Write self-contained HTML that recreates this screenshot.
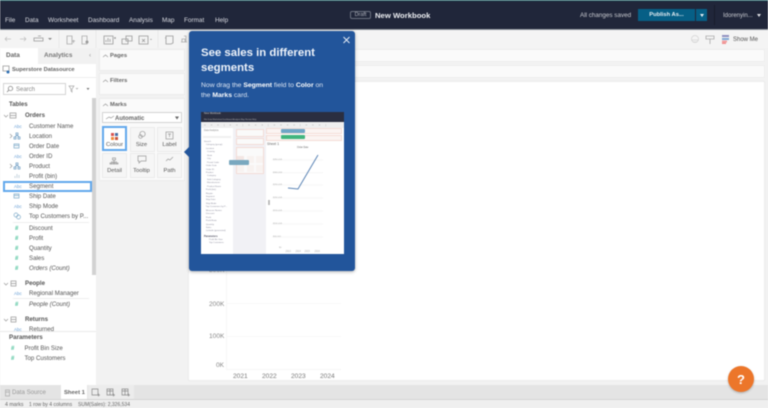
<!DOCTYPE html>
<html><head><meta charset="utf-8"><style>
*{box-sizing:border-box}
html,body{margin:0;padding:0;width:768px;height:408px;overflow:hidden;background:#f2f2f2}
body{font-family:"Liberation Sans",sans-serif;color:#333}
#w{position:absolute;left:0;top:0;width:768px;height:408px;overflow:hidden;filter:blur(.5px)}
.a,.t{position:absolute}
.t{white-space:nowrap;line-height:10px;font-size:6.1px;color:#444}
.m{color:#d8dae0;font-size:6.4px;top:16px}
.f{left:29px;color:#555}
.c{width:25px;border:1px solid #ebebeb;background:#f6f6f6;height:25px}
.l{color:#555;font-size:5.8px;text-align:center;width:27px}
.h{left:15px;font-size:6px;color:#4cc29b;font-weight:bold}
.b{left:14px;font-size:4.5px;color:#6ea3d6}
.y{left:72px;font-size:2.2px;color:#aaa}
.x{top:135px;font-size:2.4px;color:#aaa}
svg{position:absolute;overflow:visible}
</style></head><body><div id="w">
<!-- top bar -->
<div class="a" style="left:0;top:0;width:768px;height:29px;background:#20263a"></div>
<div class="a" style="left:0;top:0;width:768px;height:1px;background:#2f6f72"></div>
<div class="a" style="left:0;top:29px;width:768px;height:1px;background:#8f949c"></div>
<span class="t m" style="left:5px">File</span><span class="t m" style="left:25px">Data</span><span class="t m" style="left:48px">Worksheet</span><span class="t m" style="left:88px">Dashboard</span><span class="t m" style="left:129px">Analysis</span><span class="t m" style="left:162px">Map</span><span class="t m" style="left:184px">Format</span><span class="t m" style="left:215px">Help</span>
<div class="a t" style="left:350px;top:11px;width:21px;height:8px;border:1px solid #6c7280;border-radius:2px;color:#b0b3bc;font-size:5.4px;line-height:6px;text-align:center">Draft</div>
<span class="t" style="left:375px;top:10.500px;color:#eceef2;font-size:7.700px;font-weight:bold">New Workbook</span>
<span class="t" style="left:580px;top:10.500px;color:#c8cad0;font-size:6.300px">All changes saved</span>
<div class="a t" style="left:638px;top:9px;width:57px;height:12px;background:#065f86;color:#e8f0f4;font-size:5.800px;font-weight:bold;line-height:12px;text-align:center">Publish As...</div>
<div class="a" style="left:696px;top:9px;width:11px;height:12px;background:#065f86"></div>
<div class="a" style="left:699.5px;top:14px;border:2px solid transparent;border-top:3px solid #e8f0f4"></div>
<div class="a" style="left:714px;top:5px;width:1px;height:20px;background:#171b2a"></div>
<span class="t" style="left:723px;top:10.500px;color:#c8cad0;font-size:6px">Idorenyin...</span>
<div class="a" style="left:757px;top:14px;border:2px solid transparent;border-top:3px solid #e0e2e6"></div>
<!-- toolbar -->
<div class="a" style="left:0;top:30px;width:768px;height:18px;background:#f4f4f4"></div>
<svg style="left:0;top:30px" width="190" height="18" fill="none" stroke="#aaa" stroke-width=".8">
<path d="M5 9h6M5 9l2-2M5 9l2 2M20 9h6M26 9l-2-2M26 9l-2 2" stroke="#c0c0c0"/>
<path d="M34 8h9v3h-9zM38 6h3" stroke="#999"/><path d="M48 8l2 2 2-2z" fill="#888" stroke="none"/>
<path d="M59 0v18M96 0v18M158 0v18" stroke="#e6e6e6"/>
<path d="M67 6h5v8h-5zM72 11h3M73.500 10v3M82 6h5v8h-5z" stroke="#aaa"/><circle cx="87" cy="12" r="1.500" fill="#999" stroke="none"/>
<path d="M104 6h9v8h-9zM106 12v-2M108 12V8M110 12v-3M114 8h2M115 7v2" stroke="#999"/>
<path d="M122 9h6v5h-6zM126 6h6v5h-6z" stroke="#999"/>
<path d="M139 6h9v8h-9zM142 9l3 3M145 9l-3 3" stroke="#999"/><path d="M150 9l1 1 1-1z" fill="#888" stroke="none"/>
<path d="M166 6h7v7l-2 1h-5zM166 8l-1 0" stroke="#999"/><path d="M181 12h6M182 9h3v3h-3zM184 6h2v6" stroke="#aaa"/>
</svg>
<svg style="left:690px;top:30px" width="78" height="18" fill="none" stroke="#d4d4d4" stroke-width=".8">
<circle cx="5" cy="9" r="3.500"/><path d="M2 10h6M3 12h4"/><path d="M16 6h8v3h-8zM20 9v5" stroke="#aaa"/>
<rect x="32" y="5" width="7" height="2" fill="#8f8fc0" stroke="none"/><rect x="32" y="8" width="7" height="2" fill="#7fa8d5" stroke="none"/><rect x="32" y="10.500" width="5" height="2" fill="#f2a0a0" stroke="none"/><rect x="32" y="12.500" width="4" height="1.500" fill="#f09090" stroke="none"/>
</svg>
<span class="t" style="left:733px;top:34.500px;font-size:6px;color:#555">Show Me</span>
<!-- left data pane -->
<div class="a" style="left:0;top:48px;width:96px;height:337px;background:#fff"></div>
<div class="a" style="left:38px;top:48px;width:58px;height:16px;background:#f1f1f1"></div>
<span class="t" style="left:6px;top:51px;font-size:6.400px;font-weight:bold;color:#666">Data</span>
<span class="t" style="left:44px;top:51px;font-size:6.400px;font-weight:bold;color:#777">Analytics</span>
<span class="t" style="left:89px;top:51px;font-size:6.4px;color:#999">‹</span>
<svg style="left:2px;top:65px" width="10" height="10" fill="none" stroke="#999" stroke-width=".8"><path d="M1 1h6v5h-6z"/><circle cx="6" cy="7" r="1.500" fill="#2f6fb3" stroke="none"/></svg>
<span class="t" style="left:12px;top:64.500px;font-size:5.700px;font-weight:bold;color:#666">Superstore Datasource</span>
<div class="a" style="left:0;top:77px;width:96px;height:1px;background:#eee"></div>
<div class="a" style="left:3px;top:83px;width:63px;height:12px;border:1px solid #d4d4d4;background:#fff"></div>
<svg style="left:6px;top:85px" width="8" height="8" fill="none" stroke="#777" stroke-width=".7"><circle cx="4.500" cy="3.500" r="2.200"/><path d="M3 5L1 7"/></svg>
<span class="t" style="left:16px;top:84.500px;font-size:6px;color:#888">Search</span>
<svg style="left:68px;top:85px" width="26" height="8" fill="none" stroke="#aaa" stroke-width=".7"><path d="M1 1h5L4 4v3L3 6V4zM8 3l1 1 1-1" /><path d="M18.500 3h3l-1.500 2z" fill="#777" stroke="none"/></svg>
<div class="a" style="left:92px;top:98px;width:4px;height:177px;background:#d2d2d2"></div>
<span class="t" style="left:9px;top:100px;font-size:6px;font-weight:bold;color:#555">Tables</span>
<svg style="left:0;top:108px" width="30" height="230" fill="none" stroke="#999" stroke-width=".7">
<path d="M4 7l2 2 2-2M10 5h6v5h-6zM10 7.500h6"/>
<path d="M4 175l2 2 2-2M11 173h5v5h-5zM11 175.500h5"/><path d="M4 211l2 2 2-2M11 209h5v5h-5zM11 211.500h5"/>
<path d="M10 26l2 2-2 2M10 56l2 2-2 2" />
<path d="M16 25h2v2h-2zM14 29h2v2h-2zM18 29h2v2h-2zM17 27l-2 2M17 27l2 2M16 55h2v2h-2zM14 59h2v2h-2zM18 59h2v2h-2zM17 57l-2 2M17 57l2 2" stroke="#6d9cc2"/>
<path d="M14 36h5v4h-5zM14 37.500h5M14 86h5v4h-5zM14 87.500h5" stroke="#7fabc9"/>
<path d="M15 70v-2M17 70v-4M19 70v-3" stroke="#b0c2d2"/><circle cx="16" cy="107" r="2" stroke="#7fabc9"/><circle cx="18.500" cy="109" r="2" stroke="#7fabc9"/>
</svg>
<div class="a" style="left:3px;top:181px;width:89px;height:11px;border:2px solid #62a8ec;background:#fff"></div>
<span class="t" style="left:25px;top:110.500px;font-size:6.100px;font-weight:bold;color:#555">Orders</span>
<span class="t f" style="top:121.500px">Customer Name</span><span class="t f" style="top:131.500px">Location</span><span class="t f" style="top:141.500px">Order Date</span><span class="t f" style="top:151.500px">Order ID</span><span class="t f" style="top:161.500px">Product</span><span class="t f" style="top:171.500px">Profit (bin)</span><span class="t f" style="top:181.500px">Segment</span><span class="t f" style="top:191.500px">Ship Date</span><span class="t f" style="top:201.500px">Ship Mode</span><span class="t f" style="top:211.500px">Top Customers by P...</span>
<div class="a" style="left:13px;top:222px;width:76px;height:1px;background:#eee"></div>
<span class="t f" style="top:223.500px">Discount</span><span class="t f" style="top:233.500px">Profit</span><span class="t f" style="top:243.500px">Quantity</span><span class="t f" style="top:253.500px">Sales</span><span class="t f" style="top:263.500px;font-style:italic">Orders (Count)</span>
<span class="t" style="left:25px;top:278.500px;font-size:6.100px;font-weight:bold;color:#555">People</span>
<span class="t f" style="top:288.500px">Regional Manager</span>
<div class="a" style="left:13px;top:298px;width:76px;height:1px;background:#eee"></div>
<span class="t f" style="top:299.500px;font-style:italic">People (Count)</span>
<span class="t" style="left:25px;top:314.500px;font-size:6.100px;font-weight:bold;color:#555">Returns</span>
<span class="t f" style="top:324.500px">Returned</span>
<span class="t b" style="top:121.500px">Abc</span><span class="t b" style="top:151.500px">Abc</span><span class="t b" style="top:181.500px">Abc</span><span class="t b" style="top:201.500px">Abc</span><span class="t b" style="top:288.500px">Abc</span><span class="t b" style="top:324.500px">Abc</span>
<span class="t h" style="top:223.500px">#</span><span class="t h" style="top:233.500px">#</span><span class="t h" style="top:243.500px">#</span><span class="t h" style="top:253.500px">#</span><span class="t h" style="top:263.500px">#</span><span class="t h" style="top:299.500px">#</span>
<!-- parameters -->
<div class="a" style="left:0;top:331px;width:96px;height:54px;background:#fff;border-top:1px solid #eaeaea"></div>
<span class="t" style="left:9px;top:333px;font-size:6.200px;font-weight:bold;color:#555">Parameters</span>
<span class="t h" style="left:11px;top:343.500px">#</span><span class="t h" style="left:11px;top:353.500px">#</span>
<span class="t" style="left:24.500px;top:343.500px;color:#555">Profit Bin Size</span><span class="t" style="left:24.500px;top:353.500px;color:#555">Top Customers</span>
<!-- shelves column -->
<div class="a" style="left:96px;top:48px;width:92px;height:337px;background:#f2f2f2"></div>
<div class="a" style="left:99px;top:49px;width:86px;height:22px;background:#fafafa;border:1px solid #ececec"></div>
<div class="a" style="left:99px;top:73px;width:86px;height:22px;background:#fafafa;border:1px solid #ececec"></div>
<div class="a" style="left:99px;top:98px;width:86px;height:83px;background:#fafafa;border:1px solid #ececec"></div>
<svg style="left:103px;top:53px" width="6" height="60" fill="none" stroke="#999" stroke-width=".7"><path d="M0 4l2.500-2 2.500 2M0 29l2.500-2 2.500 2M0 53l2.500-2 2.500 2"/></svg>
<span class="t" style="left:110px;top:50.500px;font-weight:bold;color:#666;font-size:5.800px">Pages</span>
<span class="t" style="left:110px;top:75.500px;font-weight:bold;color:#666;font-size:5.800px">Filters</span>
<span class="t" style="left:110px;top:100px;font-weight:bold;color:#666;font-size:5.800px">Marks</span>
<div class="a" style="left:102px;top:112px;width:80px;height:11px;background:#fff;border:1px solid #d4d4d4"></div>
<svg style="left:105px;top:114px" width="76" height="8" fill="none" stroke="#999" stroke-width=".7"><path d="M1 5l3-2 2 1 3-2"/><path d="M70 2.500h4l-2 3z" fill="#666" stroke="none"/></svg>
<span class="t" style="left:115px;top:113.500px;font-weight:bold;color:#666;font-size:6px">Automatic</span>
<div class="a c" style="left:102px;top:126px;background:#fff;border:2px solid #62a8ec"></div>
<div class="a c" style="left:130px;top:127px"></div><div class="a c" style="left:157px;top:127px"></div>
<div class="a c" style="left:102px;top:153px"></div><div class="a c" style="left:130px;top:153px"></div><div class="a c" style="left:157px;top:153px"></div>
<span class="t l" style="left:101px;top:139.500px">Colour</span><span class="t l" style="left:128px;top:139.500px">Size</span><span class="t l" style="left:156px;top:139.500px">Label</span>
<span class="t l" style="left:101px;top:165.500px">Detail</span><span class="t l" style="left:128px;top:165.500px">Tooltip</span><span class="t l" style="left:156px;top:165.500px">Path</span>
<svg style="left:100px;top:128px" width="85" height="50" fill="none" stroke="#999" stroke-width=".7">
<rect x="11" y="5" width="3" height="3" fill="#d9534f" stroke="none"/><rect x="15" y="5" width="3" height="3" fill="#4a6fa5" stroke="none"/><rect x="11" y="9" width="3" height="3" fill="#f08a3c" stroke="none"/><rect x="15" y="9" width="3" height="3" fill="#c8553d" stroke="none"/>
<circle cx="42.500" cy="6" r="2.700"/><circle cx="40.500" cy="8.500" r="1.800"/><rect x="66" y="4" width="7" height="7"/><path d="M68 6h3M69.500 6v3"/>
<path d="M12.500 30h3v2h-3zM10 35h2v1h-2zM13 35h2v1h-2zM16 35h2v1h-2zM14 32v3M11 34h6"/><path d="M38 28h8v5h-5l-2 2v-2h-1z"/><path d="M66 33l2-2 2 1 3-3"/>
</svg>
<!-- right area -->
<div class="a" style="left:188px;top:48px;width:580px;height:337px;background:#f2f2f2"></div>
<div class="a" style="left:190px;top:49px;width:575px;height:13px;background:#fafafa;border:1px solid #eeeeee"></div>
<div class="a" style="left:190px;top:65px;width:575px;height:13px;background:#fafafa;border:1px solid #eeeeee"></div>
<div class="a" style="left:188px;top:81px;width:577px;height:300px;background:#fff;border:1px solid #ececec"></div>
<!-- chart -->
<div class="a" style="left:226px;top:270px;width:1px;height:100px;background:#f6f6f6"></div>
<div class="a" style="left:226px;top:303px;width:115px;height:1px;background:#f8f8f8"></div>
<div class="a" style="left:226px;top:336px;width:115px;height:1px;background:#f8f8f8"></div>
<div class="a" style="left:226px;top:369px;width:115px;height:1px;background:#f6f6f6"></div>
<span class="t" style="left:209px;top:266px;font-size:6.600px;color:#999">300K</span>
<span class="t" style="left:209px;top:299.500px;font-size:6.600px;color:#888">200K</span>
<span class="t" style="left:209px;top:331.500px;font-size:6.600px;color:#888">100K</span>
<span class="t" style="left:216px;top:360.500px;font-size:6.600px;color:#888">0K</span>
<span class="t" style="left:233px;top:371.500px;font-size:6.600px;color:#777">2021</span>
<span class="t" style="left:262px;top:371.500px;font-size:6.600px;color:#777">2022</span>
<span class="t" style="left:291px;top:371.500px;font-size:6.600px;color:#777">2023</span>
<span class="t" style="left:320px;top:371.500px;font-size:6.600px;color:#777">2024</span>
<!-- popup -->
<div class="a" style="left:189px;top:31px;width:166px;height:240px;background:#22559b;border-radius:3px;box-shadow:0 1px 3px rgba(0,0,0,.3)"></div>
<div class="a" style="left:184px;top:146px;border:6px solid transparent;border-right:6px solid #22559b;border-left:0;height:12px"></div>
<svg style="left:343px;top:36px" width="7" height="8" stroke="#e4ebf5" stroke-width="1"><path d="M.5 1l6 6M6.500 1l-6 6"/></svg>
<div class="t" style="left:201px;top:46px;font-size:11.400px;line-height:14.500px;font-weight:bold;color:#eef3fa">See sales in different<br>segments</div>
<div class="t" style="left:201px;top:80.500px;font-size:6.800px;line-height:10px;color:#dde6f3">Now drag the <b style="color:#fff">Segment</b> field to <b style="color:#fff">Color</b> on<br>the <b style="color:#fff">Marks</b> card.</div>
<!-- thumbnail -->
<div class="a" style="left:201px;top:112px;width:143px;height:142px;background:#fff;overflow:hidden">
<div class="a" style="left:0;top:0;width:143px;height:10px;background:#2a2e40"></div>
<span class="t" style="left:3px;top:-3px;font-size:2.500px;color:#ccc">New Workbook</span>
<span class="t" style="left:3px;top:2.500px;font-size:2px;color:#bbb">File   Data   Worksheet   Dashboard   Analysis   Map   Format   Help</span>
<div class="a" style="left:0;top:10px;width:143px;height:6px;background:#efefef"></div>
<div class="t" style="left:3px;top:11px;font-size:3px;line-height:4px;color:#aaa;letter-spacing:2px">= = = | = = | = = = | = = = = | = = = |</div>
<div class="a" style="left:32px;top:16px;width:33px;height:126px;background:#f1f1f5"></div>
<span class="t" style="left:3px;top:17px;font-size:2.300px;line-height:4px;color:#888">Data    Analytics</span>
<div class="a" style="left:2px;top:24px;width:28px;height:2px;background:#f0f0f0"></div>
<div class="t" style="left:3px;top:29px;font-size:2.200px;line-height:3.430px;color:#889;white-space:pre">Search
   Category (group)
   Location
     Country
     State
     City
     Postal Code
   Order Date
   Order ID
   Product
     Category
     Sub-Category
     Manufacturer
     Product Name
   Profit (bin)
   Region
   Segment
   Ship Date
   Ship Mode
   Top Customers by P...
   Measure Names
   Discount
   Profit
   Profit Ratio
   Quantity
   Sales
   Latitude (generated)</div>
<span class="t" style="left:3px;top:123px;font-size:2.500px;line-height:4px;font-weight:bold;color:#556">Parameters</span>
<div class="t" style="left:8px;top:127px;font-size:2.200px;line-height:3.430px;color:#889;white-space:pre">Profit Bin Size
Top Customers</div>
<div class="a" style="left:35px;top:17px;width:28px;height:8px;background:#fafafa;border:.5px solid #f3dcd6"></div>
<div class="a" style="left:35px;top:26px;width:28px;height:7px;background:#fafafa;border:.5px solid #f3dcd6"></div>
<div class="a" style="left:35px;top:35px;width:28px;height:27px;background:#fafafa;border:.5px solid #f3dcd6"></div>
<div class="a" style="left:36px;top:44px;width:7px;height:7px;background:#f3e6e3"></div>
<div class="a" style="left:46px;top:44px;width:7px;height:7px;background:#f8f2f0"></div>
<div class="a" style="left:55px;top:44px;width:7px;height:7px;background:#f8f2f0"></div>
<div class="a" style="left:36px;top:53px;width:7px;height:7px;background:#f8f2f0"></div>
<div class="a" style="left:46px;top:53px;width:7px;height:7px;background:#f8f2f0"></div>
<div class="a" style="left:55px;top:53px;width:7px;height:7px;background:#f8f2f0"></div>
<div class="a" style="left:65px;top:16px;width:76px;height:6px;background:#fbf4f2;border:.5px solid #f3dcd6"></div>
<div class="a" style="left:65px;top:22.500px;width:76px;height:6px;background:#fbf4f2;border:.5px solid #f3dcd6"></div>
<div class="a" style="left:80px;top:17px;width:24px;height:4px;background:#6ea6c6;border-radius:1px"></div>
<div class="a" style="left:80px;top:23px;width:24px;height:4px;background:#41b57e;border-radius:1px"></div>
<div class="a" style="left:28px;top:48px;width:20px;height:5px;background:#7aa8bf;border-radius:1px"></div>
<span class="t" style="left:66px;top:27px;font-size:3.500px;color:#666">Sheet 1</span>
<span class="t" style="left:96px;top:31px;font-size:2.300px;color:#666">Order Date</span>
<svg style="left:0;top:0" width="143" height="142" fill="none">
<path d="M71 48h51M71 60.700h51M71 73h51M71 86h51M71 99h51M71 112h51M71 125h51" stroke="#f0f0f0" stroke-width=".6"/>
<path d="M87 76l10 1 20-34" stroke="#5b84b5" stroke-width="1"/>
<path d="M68 88v5" stroke="#aaa" stroke-width="1.500"/>
</svg>
<span class="t y" style="top:43px">$350,000</span>
<span class="t y" style="top:55.700px">$300,000</span>
<span class="t y" style="top:68px">$250,000</span>
<span class="t y" style="top:81px">$200,000</span>
<span class="t y" style="top:94px">$150,000</span>
<span class="t y" style="top:107px">$100,000</span>
<span class="t y" style="top:120px">$50,000</span>
<span class="t y" style="left:78px;top:131px">$0</span>
<span class="t x" style="left:84.500px">2013</span><span class="t x" style="left:94.500px">2014</span><span class="t x" style="left:103.500px">2015</span><span class="t x" style="left:113.500px">2016</span>
</div>
<!-- bottom tabs -->
<div class="a" style="left:0;top:385px;width:768px;height:14px;background:#e4e4e4"></div>
<div class="a" style="left:0;top:399px;width:768px;height:1px;background:#d4d4d4"></div>
<div class="a" style="left:0;top:400px;width:768px;height:8px;background:#efefef"></div>
<div class="a" style="left:61px;top:385px;width:26px;height:14px;background:#fff"></div>
<div class="a" style="left:88px;top:385px;width:46px;height:14px;background:#ececec"></div>
<svg style="left:4px;top:388px" width="130" height="10" fill="none" stroke="#aaa" stroke-width=".7"><path d="M1.500 2h4v6h-4zM1.500 4h4"/><path d="M88 1h6v6h-6zM93 7h3M94.500 5.500v3M103 1h6v6h-6zM103 3h6M106 1v6M108 7h3M109.500 5.500v3M118 1h6v6h-6zM118 3h6M121 1v6M123 7h3M124.500 5.500v3" stroke="#888"/></svg>
<span class="t" style="left:12px;top:387.500px;font-size:6.100px;color:#999">Data Source</span>
<span class="t" style="left:64px;top:387.500px;font-size:5.900px;font-weight:bold;color:#666">Sheet 1</span>
<span class="t" style="left:5px;top:399.500px;font-size:5.200px;color:#666">4 marks</span>
<span class="t" style="left:29px;top:399.500px;font-size:5px;color:#666">1 row by 4 columns</span>
<span class="t" style="left:78px;top:399.500px;font-size:5px;color:#666">SUM(Sales): 2,326,534</span>
<!-- help -->
<div class="a" style="left:728px;top:366px;width:26px;height:26px;border-radius:50%;background:#ec762a;box-shadow:0 1px 2px rgba(0,0,0,.25)"></div>
<span class="t" style="left:728px;top:373px;width:26px;text-align:center;font-size:13px;line-height:13px;font-weight:bold;color:#fff">?</span>
</div></body></html>
